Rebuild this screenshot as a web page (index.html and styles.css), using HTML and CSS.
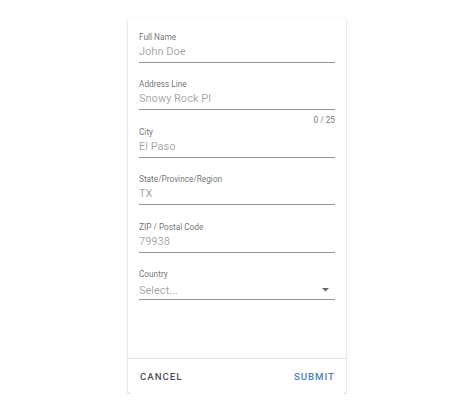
FILE: index.html
```html
<!DOCTYPE html>
<html>
<head>
<meta charset="utf-8">
<link rel="stylesheet" href="styles.css">
</head>
<body>
<div class="card">
  <div class="form">
    <div class="field">
      <div class="label">Full Name</div>
      <div class="input">John Doe</div>
    </div>
    <div class="field field--helper">
      <div class="label">Address Line</div>
      <div class="input">Snowy Rock Pl</div>
      <div class="helper">0 / 25</div>
    </div>
    <div class="field">
      <div class="label">City</div>
      <div class="input">El Paso</div>
    </div>
    <div class="field">
      <div class="label">State/Province/Region</div>
      <div class="input">TX</div>
    </div>
    <div class="field">
      <div class="label">ZIP / Postal Code</div>
      <div class="input">79938</div>
    </div>
    <div class="field">
      <div class="label">Country</div>
      <div class="input select">
        <span>Select...</span>
        <svg class="arrow" width="7" height="4" viewBox="0 0 7 4"><path d="M0 0 L7 0 L3.5 3.5 Z" fill="#666"/></svg>
      </div>
    </div>
  </div>
  <div class="footer">
    <span class="btn btn--cancel">CANCEL</span>
    <span class="btn btn--submit">SUBMIT</span>
  </div>
</div>
</body>
</html>
```
FILE: styles.css
```css
html, body {
  margin: 0;
  padding: 0;
  background: #fff;
}
body {
  font-family: Roboto, "Liberation Sans", sans-serif;
  padding-top: 18px;
}
.card {
  width: 218px;
  height: 376px;
  margin: 0 auto;
  border-radius: 3px;
  box-shadow: 0 1px 3px rgba(0,0,0,0.2), 0 1px 1px rgba(0,0,0,0.14), 0 2px 1px -1px rgba(0,0,0,0.12);
  display: flex;
  flex-direction: column;
  box-sizing: border-box;
}
.form {
  flex: 1;
  padding: 14px 11px 0 11px;
}
.field {
  margin-bottom: 16.4px;
}
.field--helper {
  margin-bottom: 1.9px;
}
.label {
  font-size: 8.25px;
  line-height: 10px;
  height: 10px;
  color: rgba(0,0,0,0.6);
}
.input {
  font-size: 11px;
  line-height: 15px;
  height: 18px;
  padding-top: 2px;
  color: rgba(0,0,0,0.38);
  border-bottom: 1px solid rgba(0,0,0,0.42);
}
.select {
  display: flex;
  justify-content: space-between;
  align-items: center;
  height: 17px;
  padding-top: 3px;
}
.arrow {
  margin-right: 6px;
}
.helper {
  font-size: 8.25px;
  line-height: 10px;
  margin-top: 4.5px;
  text-align: right;
  color: rgba(0,0,0,0.6);
}
.footer {
  height: 36px;
  border-top: 1px solid rgba(0,0,0,0.12);
  display: flex;
  justify-content: space-between;
  align-items: center;
  padding: 0 11px 0 12px;
  box-sizing: border-box;
}
.btn {
  font-size: 9.7px;
  font-weight: 500;
  letter-spacing: 0.1em;
}
.btn--cancel {
  color: rgba(0,0,0,0.72);
}
.btn--submit {
  color: #4a80c4;
}
```
